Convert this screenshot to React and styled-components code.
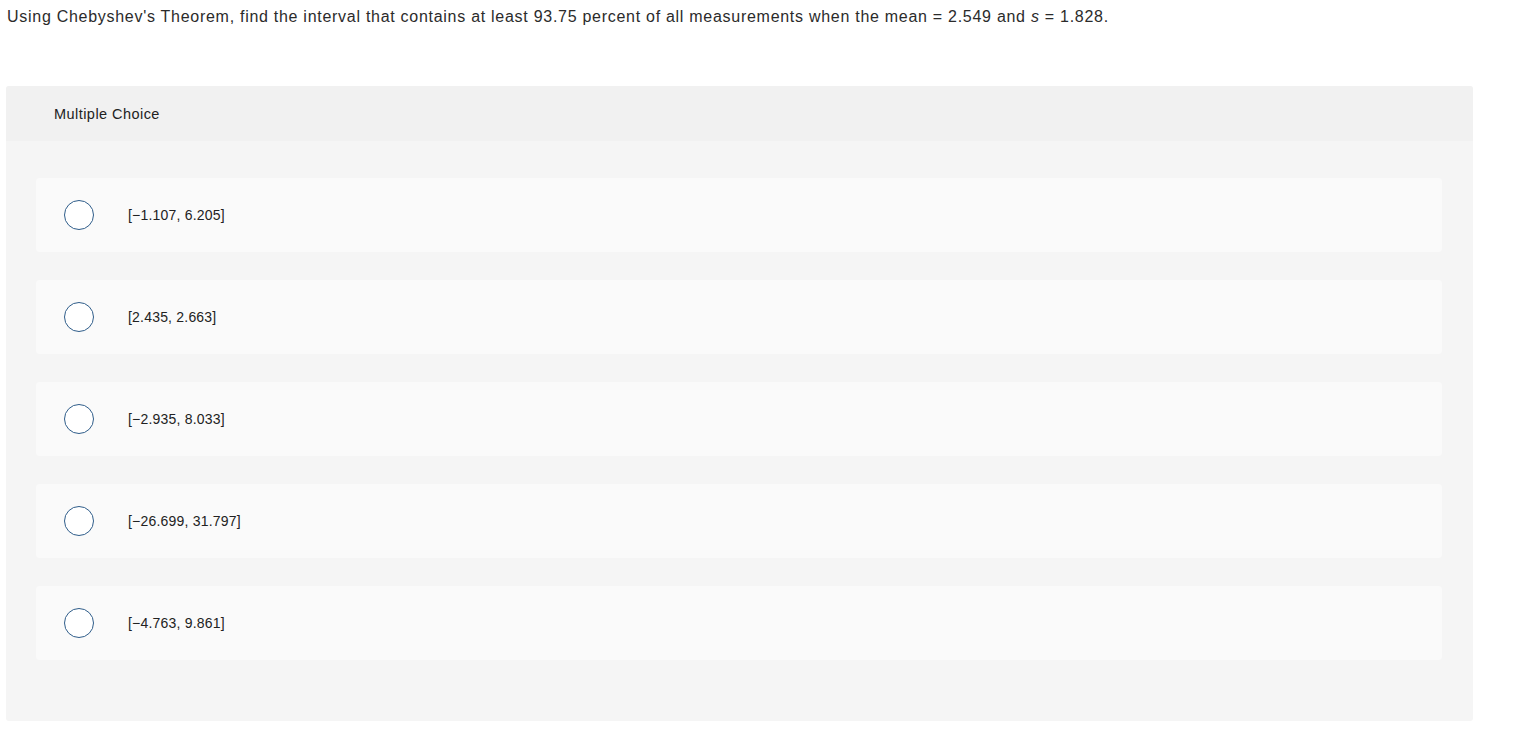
import React from "react";
import styled, { createGlobalStyle } from "styled-components";

const GlobalStyle = createGlobalStyle`
  body {
    margin: 0;
    background: #fff;
    font-family: "Liberation Sans", Arial, sans-serif;
    color: #222;
  }
`;

const options = [
  "[−1.107, 6.205]",
  "[2.435, 2.663]",
  "[−2.935, 8.033]",
  "[−26.699, 31.797]",
  "[−4.763, 9.861]",
];

function App() {
  return (
    <>
      <GlobalStyle />
      <Page>
        <Question>
          Using Chebyshev's Theorem, find the interval that contains at least
          93.75 percent of all measurements when the mean = 2.549 and{" "}
          <Var>s</Var> = 1.828.
        </Question>
        <Panel>
          <PanelHeader>Multiple Choice</PanelHeader>
          <Choices>
            {options.map((opt) => (
              <Choice key={opt}>
                <Radio />
                <Label>{opt}</Label>
              </Choice>
            ))}
          </Choices>
        </Panel>
      </Page>
    </>
  );
}

export default App;

const Page = styled.div`
  padding: 7px 49px 0 6px;
`;

const Question = styled.p`
  margin: 0 0 0 1px;
  font-size: 16px;
  line-height: 20px;
  letter-spacing: 0.72px;
  color: #2b2b2b;
`;

const Var = styled.i`
  font-size: 16px;
`;

const Panel = styled.div`
  margin-top: 59px;
  background: #f5f5f5;
  border-radius: 3px;
  overflow: hidden;
`;

const PanelHeader = styled.div`
  height: 55px;
  display: flex;
  align-items: center;
  padding-left: 48px;
  background: #f1f1f1;
  font-size: 14.5px;
  letter-spacing: 0.45px;
  color: #222;
`;

const Choices = styled.div`
  display: flex;
  flex-direction: column;
  gap: 28px;
  padding: 37px 31px 61px 30px;
`;

const Choice = styled.div`
  height: 74px;
  display: flex;
  align-items: center;
  background: #fafafa;
  border-radius: 4px;
  padding-left: 28px;
`;

const Radio = styled.span`
  width: 28px;
  height: 28px;
  border: 1.5px solid #2f5d8a;
  border-radius: 50%;
  background: #fff;
  flex-shrink: 0;
`;

const Label = styled.span`
  margin-left: 34px;
  font-size: 14px;
  letter-spacing: 0.2px;
  color: #222;
`;
